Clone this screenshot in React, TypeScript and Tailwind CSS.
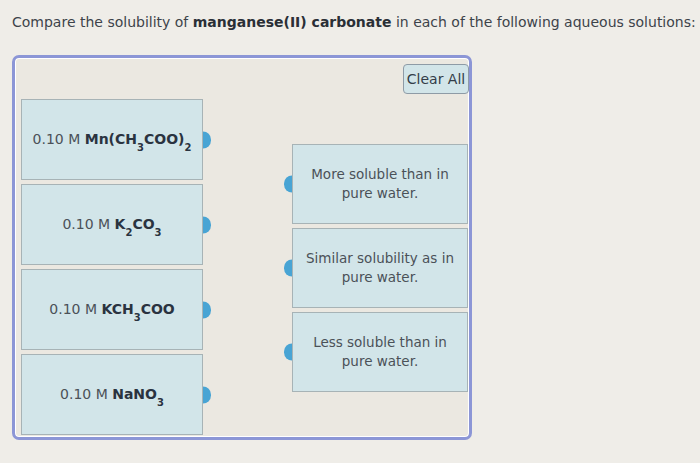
import React from "react";

const Sub = ({ children }: { children: React.ReactNode }) => (
  <sub className="text-[10px] align-baseline" style={{ verticalAlign: "-4px" }}>{children}</sub>
);

function LeftCard({ children }: { children: React.ReactNode }) {
  return (
    <div className="relative h-[81px] w-[182px] bg-[#d2e5e9] border border-[#a7b3b6] flex items-center justify-center">
      <div className="text-[14px] text-[#4b5158] whitespace-nowrap">{children}</div>
      <div className="absolute right-[-9px] top-1/2 -translate-y-1/2 w-[8px] h-[17px] rounded-r-full bg-[#48a4d4]" />
    </div>
  );
}

function RightCard({ l1, l2 }: { l1: string; l2: string }) {
  return (
    <div className="relative h-[80px] w-[176px] bg-[#d2e5e9] border border-[#a7b3b6] flex items-center justify-center">
      <div className="text-[13.5px] leading-[19px] text-[#4b5158] text-center">
        <div>{l1}</div>
        <div>{l2}</div>
      </div>
      <div className="absolute left-[-9px] top-1/2 -translate-y-1/2 w-[8px] h-[17px] rounded-l-full bg-[#48a4d4]" />
    </div>
  );
}

export default function App() {
  return (
    <div
      className="w-[700px] h-[463px] bg-[#efede8] overflow-hidden"
      style={{ fontFamily: '"DejaVu Sans", Verdana, sans-serif' }}
    >
      <div className="pl-[12px] pt-[12px] text-[14px] leading-[21px] text-[#3d434a] whitespace-nowrap">
        Compare the solubility of <b className="text-[#2a2f36]">manganese(II) carbonate</b> in each of the following aqueous solutions:
      </div>
      <div className="ml-[12px] mt-[22px] w-[460px] h-[385px] border-[3px] border-[#8c96d6] rounded-[7px] bg-[#ebe8e1] shadow-[inset_0_0_0_1px_#ffffff] flex">
        <div className="pl-[6px] pt-[41px] flex flex-col gap-[4px]">
          <LeftCard>
            0.10 M <b className="text-[#2a3340]">Mn(CH<Sub>3</Sub>COO)<Sub>2</Sub></b>
          </LeftCard>
          <LeftCard>
            0.10 M <b className="text-[#2a3340]">K<Sub>2</Sub>CO<Sub>3</Sub></b>
          </LeftCard>
          <LeftCard>
            0.10 M <b className="text-[#2a3340]">KCH<Sub>3</Sub>COO</b>
          </LeftCard>
          <LeftCard>
            0.10 M <b className="text-[#2a3340]">NaNO<Sub>3</Sub></b>
          </LeftCard>
        </div>
        <div className="ml-[89px] flex flex-col items-end pt-[6px]">
          <button className="w-[66px] h-[30px] mr-[-1px] rounded-[4px] border border-[#8e9ba6] bg-[#d2e5e9] text-[14px] text-[#343d48]">
            Clear All
          </button>
          <div className="mt-[50px] flex flex-col gap-[4px]">
            <RightCard l1="More soluble than in" l2="pure water." />
            <RightCard l1="Similar solubility as in" l2="pure water." />
            <RightCard l1="Less soluble than in" l2="pure water." />
          </div>
        </div>
      </div>
    </div>
  );
}
